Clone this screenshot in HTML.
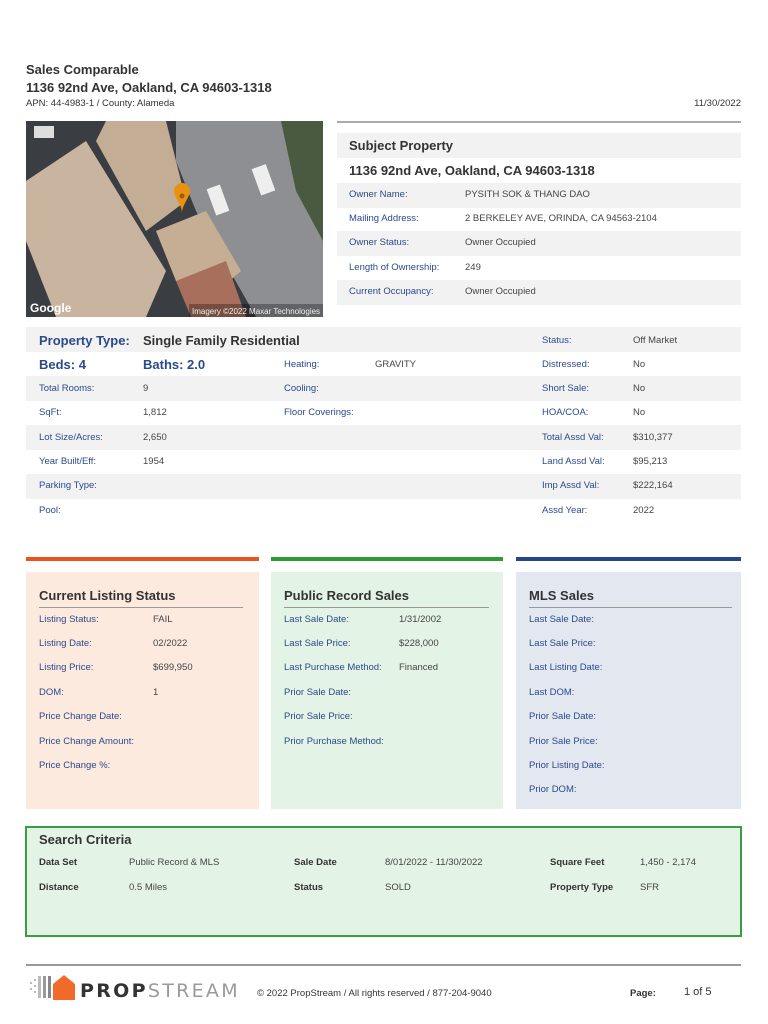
<!DOCTYPE html>
<html><head><meta charset="utf-8"><style>
*{margin:0;padding:0;box-sizing:border-box}
body{width:768px;height:1024px;background:#fff;position:relative;font-family:"Liberation Sans",Arial,sans-serif;color:#333;overflow:hidden}
.a{position:absolute;white-space:nowrap}
.h{font-size:13px;font-weight:bold;color:#333}
.s{font-size:9.5px;color:#444}
.l{font-size:9.5px;color:#2b4a8b}
.row{position:absolute;left:0;right:0;height:24.5px}
.g{background:#f2f2f2}
.bh{font-size:13px;font-weight:bold;color:#2b4a8b}
</style></head><body>
<div class="a h" style="left:26px;top:62px">Sales Comparable</div>
<div class="a h" style="left:26px;top:80px">1136 92nd Ave, Oakland, CA 94603-1318</div>
<div class="a s" style="left:26px;top:98px;color:#333">APN: 44-4983-1 / County: Alameda</div>
<div class="a s" style="right:27px;top:98px;color:#333">11/30/2022</div>

<svg class="a" style="left:26px;top:121px" width="297" height="196" viewBox="0 0 297 196">
<rect width="297" height="196" fill="#3a3d42"/>
<polygon points="150,0 297,0 297,196 230,196 170,90 150,40" fill="#8d8f93"/>
<polygon points="0,60 60,20 140,150 120,196 30,196 0,120" fill="#c9b59f"/>
<polygon points="80,0 140,0 160,80 120,110 70,20" fill="#c4ad95"/>
<polygon points="130,110 180,90 215,150 175,185 150,160" fill="#c6ae94"/>
<polygon points="150,160 200,140 220,196 165,196" fill="#a8705c"/>
<polygon points="255,0 297,0 297,120 270,70" fill="#4a5a40"/>
<rect x="230" y="45" width="15" height="28" fill="#eee" transform="rotate(-20 237 59)"/>
<rect x="185" y="65" width="14" height="28" fill="#eee" transform="rotate(-20 192 79)"/>
<rect x="8" y="5" width="20" height="12" fill="#ddd"/>
<path d="M148 70a8 8 0 0 1 16 0c0 6-8 14-8 22c0-8-8-16-8-22z" fill="#e8920f"/>
<circle cx="156" cy="75" r="2.5" fill="#9a5a10"/>
<text x="4" y="191" font-family="Liberation Sans" font-size="12" font-weight="bold" fill="#fff">Google</text>
<rect x="163" y="183" width="134" height="13" fill="rgba(0,0,0,.3)"/>
<text x="166" y="193" font-family="Liberation Sans" font-size="8" fill="#eee">Imagery ©2022 Maxar Technologies</text>
</svg>

<div class="a" style="left:337px;top:121px;width:404px;height:2px;background:#aaa"></div>
<div class="a" style="left:337px;top:133px;width:404px;height:171px">
<div class="row g" style="top:0;height:25px"></div>
<div class="a h" style="left:12px;top:5px">Subject Property</div>
<div class="a h" style="left:12px;top:30px">1136 92nd Ave, Oakland, CA 94603-1318</div>
<div class="row g" style="top:50px"></div>
<div class="row g" style="top:98px"></div>
<div class="row g" style="top:147px"></div>
<div class="a l" style="left:12px;top:56px">Owner Name:</div><div class="a s" style="left:128px;top:56px">PYSITH SOK &amp; THANG DAO</div>
<div class="a l" style="left:12px;top:80px">Mailing Address:</div><div class="a s" style="left:128px;top:80px">2 BERKELEY AVE, ORINDA, CA 94563-2104</div>
<div class="a l" style="left:12px;top:104px">Owner Status:</div><div class="a s" style="left:128px;top:104px">Owner Occupied</div>
<div class="a l" style="left:12px;top:129px">Length of Ownership:</div><div class="a s" style="left:128px;top:129px">249</div>
<div class="a l" style="left:12px;top:153px">Current Occupancy:</div><div class="a s" style="left:128px;top:153px">Owner Occupied</div>
</div>

<div class="a" style="left:26px;top:327px;width:715px;height:196px">
<div class="row g" style="top:0"></div><div class="row g" style="top:49px"></div><div class="row g" style="top:98px"></div><div class="row g" style="top:147px"></div>
<div class="a bh" style="left:13px;top:6px">Property Type:</div><div class="a h" style="left:117px;top:6px">Single Family Residential</div>
<div class="a bh" style="left:13px;top:30px">Beds: 4</div><div class="a bh" style="left:117px;top:30px">Baths: 2.0</div>
<div class="a l" style="left:258px;top:32px">Heating:</div><div class="a s" style="left:349px;top:32px">GRAVITY</div>
<div class="a l" style="left:258px;top:56px">Cooling:</div>
<div class="a l" style="left:258px;top:80px">Floor Coverings:</div>
<div class="a l" style="left:13px;top:56px">Total Rooms:</div><div class="a s" style="left:117px;top:56px">9</div>
<div class="a l" style="left:13px;top:80px">SqFt:</div><div class="a s" style="left:117px;top:80px">1,812</div>
<div class="a l" style="left:13px;top:105px">Lot Size/Acres:</div><div class="a s" style="left:117px;top:105px">2,650</div>
<div class="a l" style="left:13px;top:129px">Year Built/Eff:</div><div class="a s" style="left:117px;top:129px">1954</div>
<div class="a l" style="left:13px;top:153px">Parking Type:</div>
<div class="a l" style="left:13px;top:178px">Pool:</div>
<div class="a l" style="left:516px;top:8px">Status:</div><div class="a s" style="left:607px;top:8px">Off Market</div>
<div class="a l" style="left:516px;top:32px">Distressed:</div><div class="a s" style="left:607px;top:32px">No</div>
<div class="a l" style="left:516px;top:56px">Short Sale:</div><div class="a s" style="left:607px;top:56px">No</div>
<div class="a l" style="left:516px;top:80px">HOA/COA:</div><div class="a s" style="left:607px;top:80px">No</div>
<div class="a l" style="left:516px;top:105px">Total Assd Val:</div><div class="a s" style="left:607px;top:105px">$310,377</div>
<div class="a l" style="left:516px;top:129px">Land Assd Val:</div><div class="a s" style="left:607px;top:129px">$95,213</div>
<div class="a l" style="left:516px;top:153px">Imp Assd Val:</div><div class="a s" style="left:607px;top:153px">$222,164</div>
<div class="a l" style="left:516px;top:178px">Assd Year:</div><div class="a s" style="left:607px;top:178px">2022</div>
</div>

<div class="a" style="left:26px;top:557px;width:233px;height:4px;background:#e8561c"></div>
<div class="a" style="left:271px;top:557px;width:232px;height:4px;background:#2f9a33"></div>
<div class="a" style="left:516px;top:557px;width:225px;height:4px;background:#25478a"></div>

<div class="a" style="left:26px;top:572px;width:233px;height:237px;background:#fdeadf">
<div class="a h" style="left:13px;top:16px">Current Listing Status</div>
<div class="a" style="left:13px;top:35px;width:204px;height:1px;background:#999"></div>
<div class="a l" style="left:13px;top:42px">Listing Status:</div><div class="a s" style="left:127px;top:42px">FAIL</div>
<div class="a l" style="left:13px;top:66px">Listing Date:</div><div class="a s" style="left:127px;top:66px">02/2022</div>
<div class="a l" style="left:13px;top:90px">Listing Price:</div><div class="a s" style="left:127px;top:90px">$699,950</div>
<div class="a l" style="left:13px;top:115px">DOM:</div><div class="a s" style="left:127px;top:115px">1</div>
<div class="a l" style="left:13px;top:139px">Price Change Date:</div>
<div class="a l" style="left:13px;top:164px">Price Change Amount:</div>
<div class="a l" style="left:13px;top:188px">Price Change %:</div>
</div>
<div class="a" style="left:271px;top:572px;width:232px;height:237px;background:#e3f3e5">
<div class="a h" style="left:13px;top:16px">Public Record Sales</div>
<div class="a" style="left:13px;top:35px;width:205px;height:1px;background:#999"></div>
<div class="a l" style="left:13px;top:42px">Last Sale Date:</div><div class="a s" style="left:128px;top:42px">1/31/2002</div>
<div class="a l" style="left:13px;top:66px">Last Sale Price:</div><div class="a s" style="left:128px;top:66px">$228,000</div>
<div class="a l" style="left:13px;top:90px">Last Purchase Method:</div><div class="a s" style="left:128px;top:90px">Financed</div>
<div class="a l" style="left:13px;top:115px">Prior Sale Date:</div>
<div class="a l" style="left:13px;top:139px">Prior Sale Price:</div>
<div class="a l" style="left:13px;top:164px">Prior Purchase Method:</div>
</div>
<div class="a" style="left:516px;top:572px;width:225px;height:237px;background:#e3e7ef">
<div class="a h" style="left:13px;top:16px">MLS Sales</div>
<div class="a" style="left:13px;top:35px;width:203px;height:1px;background:#999"></div>
<div class="a l" style="left:13px;top:42px">Last Sale Date:</div>
<div class="a l" style="left:13px;top:66px">Last Sale Price:</div>
<div class="a l" style="left:13px;top:90px">Last Listing Date:</div>
<div class="a l" style="left:13px;top:115px">Last DOM:</div>
<div class="a l" style="left:13px;top:139px">Prior Sale Date:</div>
<div class="a l" style="left:13px;top:164px">Prior Sale Price:</div>
<div class="a l" style="left:13px;top:188px">Prior Listing Date:</div>
<div class="a l" style="left:13px;top:212px">Prior DOM:</div>
</div>

<div class="a" style="left:25px;top:826px;width:717px;height:111px;background:#e3f3e5;border:2px solid #3a9e3c">
<div class="a h" style="left:12px;top:4px">Search Criteria</div>
<div class="a s" style="left:12px;top:29px;font-weight:bold;color:#333">Data Set</div><div class="a s" style="left:102px;top:29px">Public Record &amp; MLS</div>
<div class="a s" style="left:267px;top:29px;font-weight:bold;color:#333">Sale Date</div><div class="a s" style="left:358px;top:29px">8/01/2022 - 11/30/2022</div>
<div class="a s" style="left:523px;top:29px;font-weight:bold;color:#333">Square Feet</div><div class="a s" style="left:613px;top:29px">1,450 - 2,174</div>
<div class="a s" style="left:12px;top:54px;font-weight:bold;color:#333">Distance</div><div class="a s" style="left:102px;top:54px">0.5 Miles</div>
<div class="a s" style="left:267px;top:54px;font-weight:bold;color:#333">Status</div><div class="a s" style="left:358px;top:54px">SOLD</div>
<div class="a s" style="left:523px;top:54px;font-weight:bold;color:#333">Property Type</div><div class="a s" style="left:613px;top:54px">SFR</div>
</div>

<div class="a" style="left:26px;top:964px;width:715px;height:2px;background:#999"></div>
<svg class="a" style="left:28px;top:974px" width="50" height="27" viewBox="0 0 50 27">
<g fill="#bbb"><rect x="2" y="8" width="2" height="2"/><rect x="2" y="14" width="2" height="2"/><rect x="6" y="5" width="2" height="2"/><rect x="6" y="11" width="2" height="2"/><rect x="6" y="17" width="2" height="2"/><rect x="10" y="2" width="3" height="22"/><rect x="15" y="2" width="3" height="22" fill="#999"/><rect x="20" y="2" width="3" height="22" fill="#888"/></g>
<polygon points="25,10 36,1 47,10 47,26 25,26" fill="#f06a2a"/>
</svg>
<div class="a" style="left:80px;top:980px;font-size:19px;letter-spacing:2.3px;font-family:'DejaVu Sans',sans-serif;font-weight:bold"><span style="color:#333">PROP</span><span style="color:#9a9a9a;font-weight:normal">STREAM</span></div>
<div class="a s" style="left:257px;top:988px;color:#333">© 2022 PropStream / All rights reserved / 877-204-9040</div>
<div class="a s" style="left:630px;top:988px;font-weight:bold;color:#333">Page:</div>
<div class="a" style="left:684px;top:986px;font-size:11px;color:#333">1 of 5</div>
</body></html>
